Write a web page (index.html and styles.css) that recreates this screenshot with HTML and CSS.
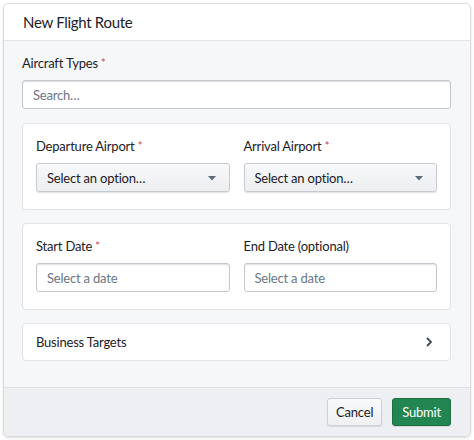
FILE: index.html
```html
<!DOCTYPE html>
<html>
<head>
<meta charset="utf-8">
<link rel="stylesheet" href="styles.css">
</head>
<body>
<div class="dialog">
  <div class="dialog-header">New Flight Route</div>
  <div class="dialog-body">
    <div class="field">
      <label class="label">Aircraft Types <span class="req">*</span></label>
      <div class="input"><span class="placeholder">Search…</span></div>
    </div>
    <div class="card">
      <div class="cols">
        <div class="field">
          <label class="label">Departure Airport <span class="req">*</span></label>
          <div class="select"><span>Select an option…</span><svg class="caret" width="10" height="6" viewBox="0 0 10 6"><path d="M1 1h8L5 5.5z" fill="#5f6b7c"/></svg></div>
        </div>
        <div class="field">
          <label class="label">Arrival Airport <span class="req">*</span></label>
          <div class="select"><span>Select an option…</span><svg class="caret" width="10" height="6" viewBox="0 0 10 6"><path d="M1 1h8L5 5.5z" fill="#5f6b7c"/></svg></div>
        </div>
      </div>
    </div>
    <div class="card">
      <div class="cols">
        <div class="field">
          <label class="label">Start Date <span class="req">*</span></label>
          <div class="input date"><span class="placeholder">Select a date</span></div>
        </div>
        <div class="field">
          <label class="label">End Date (optional)</label>
          <div class="input date"><span class="placeholder">Select a date</span></div>
        </div>
      </div>
    </div>
    <div class="card collapse">
      <span>Business Targets</span>
      <svg width="8" height="12" viewBox="0 0 8 12"><path d="M2 2l4 4-4 4" fill="none" stroke="#404854" stroke-width="1.8"/></svg>
    </div>
  </div>
  <div class="dialog-footer">
    <button class="btn">Cancel</button>
    <button class="btn primary">Submit</button>
  </div>
</div>
</body>
</html>
```
FILE: styles.css
```css
* { box-sizing: border-box; }
html, body { margin: 0; padding: 0; background: #fff; }
body {
  font-family: "Source Sans Pro", "Lato", "Noto Sans", sans-serif;
  color: #1c2127;
  padding: 3px;
  letter-spacing: -0.2px;
}
.dialog {
  width: 468px;
  height: 434px;
  border: 1px solid #d9dbdf;
  border-radius: 6px;
  background: #f6f7f9;
  box-shadow: 0 1px 3px rgba(17,20,24,0.15);
  display: flex;
  flex-direction: column;
  overflow: hidden;
}
.dialog-header {
  height: 37px;
  background: #fff;
  border-bottom: 1px solid #e3e5e8;
  padding: 0 19px;
  display: flex;
  align-items: center;
  font-size: 15px;
  letter-spacing: -0.3px;
}
.dialog-body {
  flex: 1;
  padding: 14px 19px 0 18px;
  display: flex;
  flex-direction: column;
}
.field { display: flex; flex-direction: column; }
.label {
  font-size: 13px;
  line-height: 16px;
  margin-bottom: 9px;
}
.req { color: #cd4246; font-size: 11px; vertical-align: top; }
.input {
  height: 29px;
  background: #fff;
  border: 1px solid #c3c8ce;
  border-radius: 3px;
  box-shadow: inset 0 1px 1px rgba(17,20,24,0.15);
  padding: 0 10px;
  display: flex;
  align-items: center;
  font-size: 13px;
}
.placeholder { color: #6b7686; }
.card {
  margin-top: 14px;
  background: #fff;
  border: 1px solid #e1e3e6;
  border-radius: 4px;
  padding: 14px 13px 17px;
}
.card + .card { margin-top: 13px; }
.cols {
  display: grid;
  grid-template-columns: 1fr 1fr;
  column-gap: 14px;
}
.select {
  height: 29px;
  border: 1px solid #c8ccd2;
  border-radius: 3px;
  background: linear-gradient(#f7f8f9, #eceef0);
  box-shadow: 0 1px 1px rgba(17,20,24,0.12);
  padding: 0 12px 0 10px;
  display: flex;
  align-items: center;
  justify-content: space-between;
  font-size: 13px;
  color: #1c2127;
}
.date { box-shadow: inset 0 1px 1px rgba(17,20,24,0.12); }
.collapse {
  height: 38px;
  padding: 0 17px 0 13px;
  display: flex;
  align-items: center;
  justify-content: space-between;
  font-size: 13px;
}
.dialog-footer {
  height: 49px;
  border-top: 1px solid #dcdfe3;
  background: #edeff2;
  display: flex;
  justify-content: flex-end;
  align-items: center;
  gap: 10px;
  padding: 0 19px 1px;
}
.btn {
  font-family: inherit;
  letter-spacing: -0.2px;
  font-size: 13px;
  height: 28px;
  padding: 0 8px;
  border: 1px solid #cdd1d6;
  border-radius: 3px;
  background: linear-gradient(#f8f9fa, #eef0f2);
  color: #1c2127;
  box-shadow: 0 1px 1px rgba(17,20,24,0.1);
}
.btn.primary {
  background: #238551;
  border-color: #1c6e43;
  color: #fff;
  padding: 0 9px;
}
```
